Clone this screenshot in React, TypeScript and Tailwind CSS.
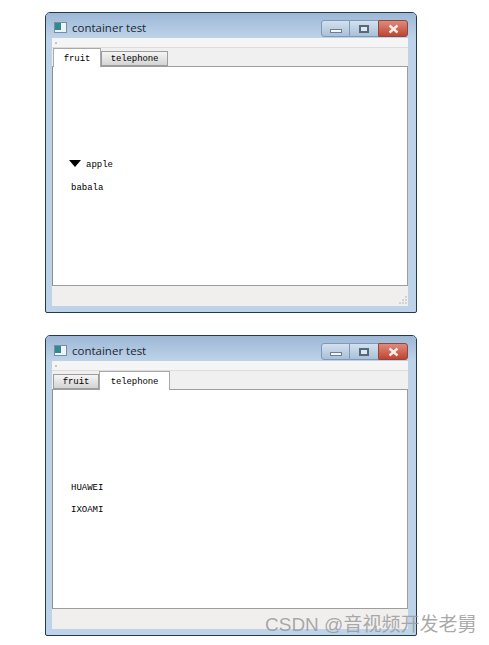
import React from 'react';

const tabFont = "font-['Liberation_Mono','DejaVu_Sans_Mono',monospace]";

const WindowButtons = () => (
    <div className="flex h-[17px]">
        <div className="w-[29px] border border-[#7f9ab6] rounded-l-[3px] bg-gradient-to-b from-[#d3e1ee] to-[#a9c0d8] flex items-end justify-center pb-[3px]">
            <div className="w-[12px] h-[4px] bg-[#f4f7fa] border border-[#6a7f93]" />
        </div>
        <div className="w-[28px] border-y border-[#7f9ab6] bg-gradient-to-b from-[#d3e1ee] to-[#a9c0d8] flex items-center justify-center">
            <div className="w-[10px] h-[8px] border-2 border-[#55697d] bg-[#dfe8f1]" />
        </div>
        <div className="w-[30px] border border-[#8a4a40] rounded-r-[3px] bg-gradient-to-b from-[#e0897c] to-[#c0432f] flex items-center justify-center">
            <svg width="13" height="10" viewBox="0 0 13 10">
                <path d="M2.5 1.5 L10.5 8.5 M10.5 1.5 L2.5 8.5" stroke="#f6eeec" strokeWidth="2.4" fill="none" />
            </svg>
        </div>
    </div>
);

const AppIcon = () => (
    <div className="w-[13px] h-[11px] mt-[2px] border border-[#7b8c9e] bg-[#eef3f6] flex">
        <div className="w-[6px] h-[7px] bg-[#2f8a92]" />
    </div>
);

const Tab = ({ label, active, width }: { label: string; active: boolean; width: string }) => (
    <div
        className={
            active
                ? `relative z-10 h-[19px] mb-[-1px] justify-center bg-white border border-b-0 border-[#a8a8a8] text-[9px] tracking-[-0.1px] text-black flex items-start pt-[4px] ${width} ${tabFont}`
                : `h-[15px] justify-center pt-[2px] bg-gradient-to-b from-[#f5f5f5] to-[#d4d4d4] border border-[#9d9d9d] text-[9px] tracking-[-0.1px] text-black flex items-center ${width} ${tabFont}`
        }
    >
        {label}
    </div>
);

const TestWindow = ({ active, grip, children }: { active: 'fruit' | 'telephone'; grip?: boolean; children: React.ReactNode }) => (
    <div className="w-[372px] h-[301px] flex flex-col border border-[#26394b] rounded-t-[5px] rounded-b-[2px] bg-[#bcd3e9] overflow-hidden">
        <div className="h-[25px] shrink-0 flex items-start pl-[8px] pr-[8px] pt-[7px] bg-gradient-to-b from-[#9db8d6] to-[#bdd3e9]">
            <AppIcon />
            <span className="ml-[5px] text-[11.5px] leading-[16px] text-[#1b2733] font-['Open_Sans','Liberation_Sans',sans-serif]">container test</span>
            <div className="ml-auto">
                <WindowButtons />
            </div>
        </div>
        <div className="flex-1 ml-[6px] mr-[8px] mb-[6px] flex flex-col bg-[#f0f0f0] min-h-0">
            <div className="h-[10px] shrink-0 border-b border-[#dcdcdc] bg-[#f5f5f5] pl-[3px] pt-[4px]">
                <div className="w-[2px] h-[2px] bg-[#c4c4c4]" />
            </div>
            <div className="flex items-end h-[18px] shrink-0 pl-[1px]">
                <Tab label="fruit" active={active === 'fruit'} width={active === 'fruit' ? 'w-[48px]' : 'w-[46px]'} />
                <Tab label="telephone" active={active === 'telephone'} width={active === 'telephone' ? 'w-[71px]' : 'w-[67px]'} />
            </div>
            <div className="h-[220px] shrink-0 bg-white border border-[#9d9d9d] border-l-[#8f8f8f] pl-[17px]">
                {children}
            </div>
            <div className="flex-1 bg-[#f1efee] flex items-end justify-end pr-[1px] pb-[2px]">
                {grip && (
                    <svg width="9" height="9" viewBox="0 0 9 9">
                        <path d="M7 1h2v2H7zM4 4h2v2H4zM7 4h2v2H7zM1 7h2v2H1zM4 7h2v2H4zM7 7h2v2H7z" fill="#cfd3d6" />
                    </svg>
                )}
            </div>
        </div>
    </div>
);

const Label = ({ children }: { children: React.ReactNode }) => (
    <span className={`text-[9px] leading-[12px] text-black ${tabFont}`}>{children}</span>
);

export default function App() {
    return (
        <div className="relative w-[489px] h-[645px] overflow-hidden bg-white pt-[12px] pl-[45px] flex flex-col gap-[22px]">
            <TestWindow active="fruit" grip>
                <div className="pt-[92px] flex items-center gap-[5px] ml-[-1px]">
                    <svg width="12" height="7" viewBox="0 0 12 7" className="mt-[-3px]">
                        <path d="M0 0 H12 L6 7 Z" fill="#000" />
                    </svg>
                    <Label>apple</Label>
                </div>
                <div className="mt-[11px] pl-[1px] flex">
                    <Label>babala</Label>
                </div>
            </TestWindow>
            <TestWindow active="telephone">
                <div className="pt-[92px] pl-[1px] flex flex-col gap-[10px]">
                    <Label>HUAWEI</Label>
                    <Label>IXOAMI</Label>
                </div>
            </TestWindow>
            <div className="absolute left-[265px] top-[613px] text-[19px] leading-[24px] text-[#9a9a9a]/85 whitespace-nowrap font-['Liberation_Sans','Noto_Sans_CJK_SC',sans-serif]">
                CSDN @音视频开发老舅
            </div>
        </div>
    );
}
